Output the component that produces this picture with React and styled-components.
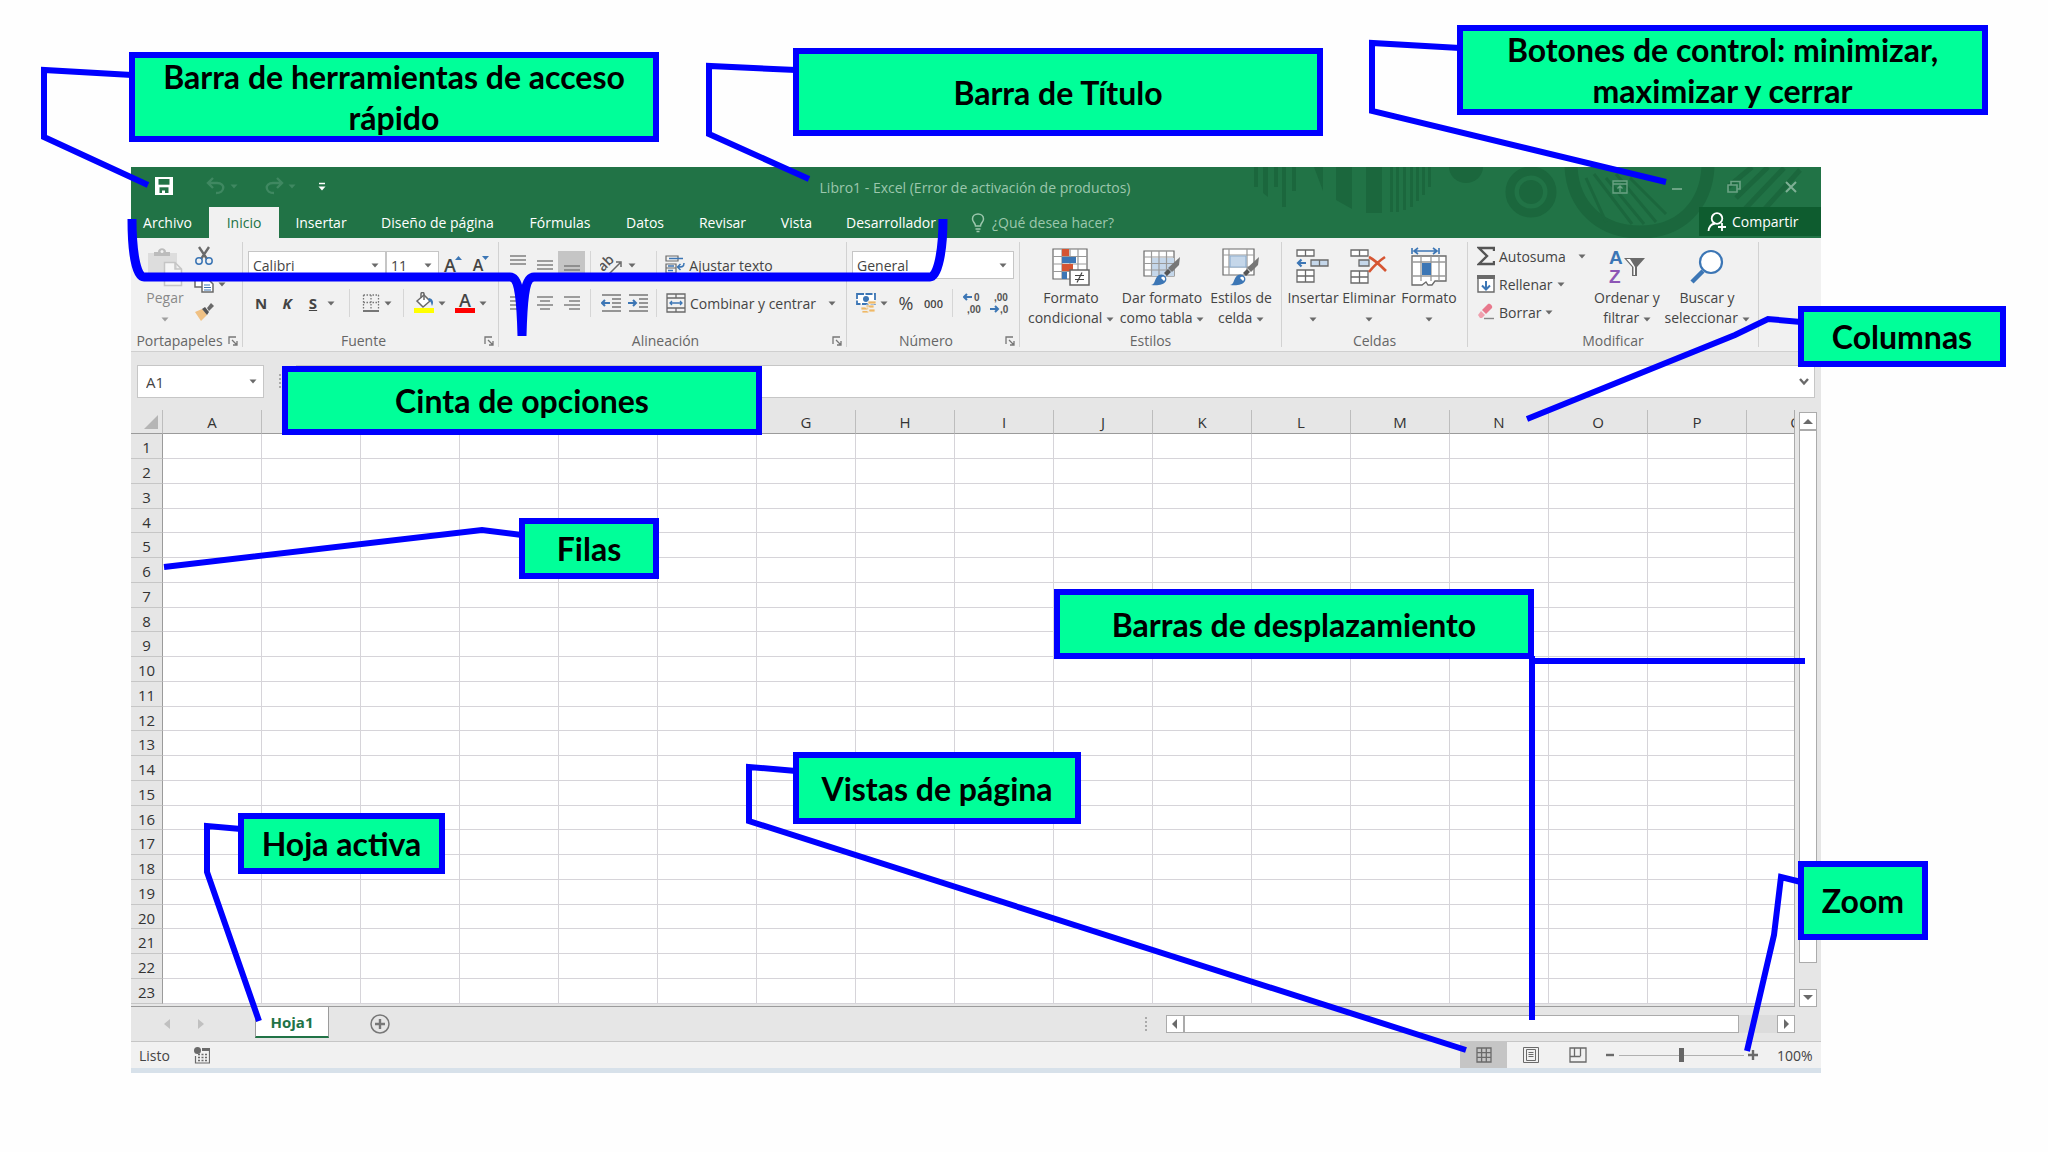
import React from 'react';
import styled, { createGlobalStyle } from 'styled-components';

const GlobalStyle = createGlobalStyle`
  * {
    box-sizing: border-box;
  }
  body {
    margin: 0;
    background: #fefefe;
    font-family: 'Open Sans', 'Noto Sans', sans-serif;
    font-size: 14px;
    color: #444;
  }
  button, input, select {
    font: inherit;
    color: inherit;
    margin: 0;
    padding: 0;
    border: 0;
    background: none;
  }
`;

const blue = '#0000ff';
const steel = '#3c76b5';
const gray = '#6a6a6a';

/* ---------- icons ---------- */

const Svg = ({ w, h, children, ...rest }) => (
  <svg width={w} height={h} viewBox={`0 0 ${w} ${h}`} fill="none" stroke={gray} strokeWidth="1.5" aria-hidden="true" {...rest}>
    {children}
  </svg>
);

const Arrow = ({ color = '#6a6a6a' }) => (
  <Svg w={8} h={5} stroke="none">
    <path d="M0.5 0.5H7.5L4 4.5Z" fill={color} />
  </Svg>
);

const Lines = ({ rows, ...rest }) => (
  <Svg w={18} h={20} stroke="#777" strokeWidth="1.4" {...rest}>
    {rows.map(([x, y, len]) => (
      <path key={y} d={`M${x} ${y}h${len}`} />
    ))}
  </Svg>
);

const SaveIcon = () => (
  <Svg w={18} h={18} stroke="#fff" strokeWidth="2">
    <path d="M1 1H17V17H1Z" />
    <path d="M2 9H16" strokeWidth="2.6" />
    <path d="M2 2H3.500V9H2ZM14.500 2H16V9H14.500ZM2 9H4.500V17H2ZM13.500 9H16V17H13.500ZM7 13.500H10V17H7Z" fill="#fff" stroke="none" />
  </Svg>
);

const UndoIcon = ({ flip }) => (
  <Svg w={20} h={18} stroke="#3f8861" strokeWidth="2.4">
    <path d="M7 1L2 6L7 11M2 6H11C20 6 19 16 10 16" transform={flip ? 'translate(20 0) scale(-1 1)' : undefined} />
  </Svg>
);

const CustomizeIcon = () => (
  <Svg w={8} h={9} stroke="#fff">
    <path d="M1 1.5H7" />
    <path d="M0.5 4.5H7.5L4 8.5Z" fill="#fff" stroke="none" />
  </Svg>
);

const BulbIcon = () => (
  <Svg w={14} h={20} stroke="#9cc7ad">
    <path d="M4.5 13C4.500 10 1.500 9 1.500 6C1.500 3 4 1 7 1C10 1 12.500 3 12.500 6C12.500 9 9.500 10 9.500 13ZM4.500 16H9.500M5.500 18.500H8.500" />
  </Svg>
);

const ShareIcon = () => (
  <Svg w={20} h={20} stroke="#fff" strokeWidth="1.8">
    <circle cx="10" cy="6.500" r="5.300" />
    <path d="M1.500 19C2 14.500 4.500 12 8 11.500M11 15H19M15 11V19" />
  </Svg>
);

const RibbonOptionsIcon = () => (
  <Svg w={16} h={14} stroke="#6ba384" strokeWidth="1.3">
    <path d="M1 1H15V13H1ZM1 4H15M8 12V6.500M5.500 8.500L8 6L10.500 8.500" />
  </Svg>
);
const MinimizeIcon = () => (
  <Svg w={12} h={14} stroke="#6ba384" strokeWidth="2">
    <path d="M1 9H11" />
  </Svg>
);
const RestoreIcon = () => (
  <Svg w={14} h={14} stroke="#6ba384" strokeWidth="1.600">
    <path d="M1 5H10V12H1ZM4 5V1.500H13V9H10" />
  </Svg>
);
const CloseIcon = () => (
  <Svg w={12} h={14} stroke="#7fb095" strokeWidth="2">
    <path d="M1 2L11 12M11 2L1 12" />
  </Svg>
);

const PasteIcon = () => (
  <Svg w={36} h={40} stroke="none">
    <path d="M1 6H30V33H1Z" fill="#d0d0d0" />
    <path d="M7 9V5H11C11 0 19 0 19 5H23V9Z" fill="#999" />
    <circle cx="15" cy="4.500" r="1.500" fill="#f1f1f1" />
    <path d="M17.500 15.500H28L34.500 22V38.500H17.500ZM28 15.500V22H34.500" fill="#f8f8f8" stroke="#a9a9a9" />
  </Svg>
);

const CutIcon = () => (
  <Svg w={20} h={20}>
    <path d="M5 1L13 13M15 1L7 13" strokeWidth="2.400" />
    <circle cx="5" cy="15" r="3.200" stroke={steel} />
    <circle cx="15" cy="15" r="3.200" stroke={steel} />
  </Svg>
);

const CopyIcon = () => (
  <Svg w={20} h={18}>
    <path d="M1 1H8L11 4V12H1Z" fill="#fff" />
    <path d="M8 5H15L19 9V17H8Z" fill="#fff" />
    <path d="M10 10H16M10 12.500H17M10 15H17" stroke={steel} strokeWidth="1.200" />
  </Svg>
);

const BrushIcon = () => (
  <Svg w={20} h={18} stroke="none">
    <path d="M1 9L8 6L13 12L7 18Z" fill="#f0c184" />
    <path d="M8 6L11 4L15 9L13 12Z" fill="#555" />
    <path d="M13 5L17 0L20 3L15 8Z" fill="#6a6a6a" />
  </Svg>
);

const GrowIcon = ({ down }) => (
  <Svg w={20} h={20} stroke="none">
    <path d={down ? 'M13 1H20L16.500 5Z' : 'M13 5H20L16.500 1Z'} fill={steel} />
  </Svg>
);

const BordersIcon = () => (
  <Svg w={18} h={18} stroke="#777" strokeWidth="1.300">
    <path d="M1.500 1H17M1.500 1V16M16.500 1V16M9 1V16M1.500 8.500H17" strokeDasharray="1.500 1.500" />
    <path d="M1 17H17" strokeWidth="2" />
  </Svg>
);

const FillIcon = () => (
  <Svg w={20} h={22}>
    <path d="M3 9L10 3L16 9L9 15Z" fill="#fff" />
    <path d="M7 6V2C7 0 10 0 10 2V8" />
    <path d="M15 6C19 7 20 10 18 14C17 11 17 9 14 8Z" fill={steel} stroke="none" />
    <path d="M0 16H20V21H0Z" fill="#ffff00" stroke="none" />
  </Svg>
);

const OrientationIcon = () => (
  <Svg w={24} h={22}>
    <text x="0" y="13" transform="rotate(-45 8 12)" fontSize="14" fontWeight="600" fill="#555" stroke="none">ab</text>
    <path d="M9 20L20 9M16 8H21V13" />
  </Svg>
);

const WrapIcon = () => (
  <Svg w={20} h={20} strokeWidth="1.200">
    <path d="M1 1H13V6H1Z" />
    <path d="M4 3.500H18" stroke={steel} strokeWidth="1.500" />
    <path d="M1 9H11V13H1ZM1 13H11V18H1Z" />
    <path d="M3 11H9M3 15.500H8M19 8C19 12 17 12 13 12M15.500 9L12.500 12L15.500 15" stroke={steel} strokeWidth="1.500" />
  </Svg>
);

const MergeIcon = () => (
  <Svg w={20} h={20} strokeWidth="1.300">
    <path d="M1 1H19V19H1ZM1 5H19M1 15H19M10 1V5M10 15V19" />
    <path d="M4 10H16M6 8L4 10L6 12M14 8L16 10L14 12" stroke={steel} />
  </Svg>
);

const IndentIcon = ({ right }) => (
  <Svg w={20} h={18} stroke="#777" strokeWidth="1.400">
    <path d="M1 1H20M11 5H20M11 9H20M11 13H20M1 17H20" />
    {right ? (
      <path d="M0 9H8M5 6L8 9L5 12" stroke={steel} strokeWidth="2" />
    ) : (
      <path d="M9 9H1M4 6L1 9L4 12" stroke={steel} strokeWidth="2" />
    )}
  </Svg>
);

const MoneyIcon = () => (
  <Svg w={20} h={20} stroke="none">
    <path d="M1 1H19V11H1Z" fill="#fff" stroke={steel} strokeWidth="1.800" strokeDasharray="7 1.500" />
    <circle cx="10" cy="6" r="3" fill={steel} />
    <path d="M12 8H20V11H12ZM10 12H18V15H10ZM5 14H13V17H5ZM6 17.500H13V20H6ZM12 16H19V19H12Z" fill="#efb866" stroke="#f1f1f1" strokeWidth="0.800" />
  </Svg>
);

const DecimalIcon = ({ less }) => (
  <Svg w={20} h={24} fontFamily="'Liberation Sans', sans-serif" fontSize="10" fontWeight="600">
    <text x={less ? 4 : 11} y="10" fill="#555" stroke="none">{less ? ',00' : '0'}</text>
    <text x={less ? 10 : 4} y="22" fill="#555" stroke="none">{less ? ',0' : ',00'}</text>
    {less ? (
      <path d="M0 18H8M5 15L8 18L5 21" stroke={steel} strokeWidth="2" />
    ) : (
      <path d="M9 6H1M4 3L1 6L4 9" stroke={steel} strokeWidth="2" />
    )}
  </Svg>
);

const ConditionalIcon = () => (
  <Svg w={38} h={38} strokeWidth="1.200">
    <path d="M1 1H35V31H1Z" fill="#fff" />
    <path d="M1 8.500H35M1 16H35M1 23.500H35M10 1V31M18 1V31M26 1V31" stroke="#999" />
    <path d="M10 1H17V8H10ZM10 16H21V23H10Z" fill="#d65532" stroke="none" />
    <path d="M10 9H24V15H10ZM10 24H15V31H10Z" fill={steel} stroke="none" />
    <path d="M18 22H37V37H18Z" fill="#fff" stroke="#666" strokeWidth="1.500" />
    <path d="M23 27.500H32M23 31.500H32M30 24.500L25 34.500" stroke="#444" />
  </Svg>
);

const PaintBrush = () => (
  <g stroke="none">
    <path d="M37 9L36 17L29 24L25 20Z" fill="#777" />
    <path d="M25 21L28 24L24 28L21 25Z" fill="#555" />
    <path d="M8 37C13 36 11 30 16 27C20 25 25 29 23 33C21 37 14 38 8 37Z" fill={steel} />
    <path d="M18 30C20 27 24 30 21 33Z" fill="#fff" />
  </g>
);

const TableFormatIcon = () => (
  <Svg w={38} h={38} strokeWidth="1.200">
    <path d="M1 3H31V28H1Z" fill="#fff" />
    <path d="M9 10H31V28H9Z" fill="#c5d7ea" stroke="none" />
    <path d="M1 9H31M1 15.500H31M1 22H31M8.500 3V28M16 3V28M23.500 3V28" stroke="#999" />
    <PaintBrush />
  </Svg>
);

const CellStylesIcon = () => (
  <Svg w={38} h={38} strokeWidth="1.200">
    <path d="M1 1H32V27H1Z" fill="#fff" />
    <path d="M1 7H32M1 19H32M7 1V27M25 1V27" stroke="#999" />
    <path d="M8 8H24V19H8Z" fill="#c5d7ea" stroke="#8fb0d0" />
    <PaintBrush />
  </Svg>
);

const InsertCellsIcon = () => (
  <Svg w={34} h={36} strokeWidth="1.300">
    <path d="M1 1H18V7H1ZM9.500 1V7M1 21H18V33H1ZM9.500 21V33M1 27H18" fill="#fff" />
    <path d="M15 11H32V17H15ZM23.500 11V17" fill="#c5d7ea" />
    <path d="M10 14H2M5.500 10.500L2 14L5.500 17.500" stroke={steel} strokeWidth="2.200" />
  </Svg>
);

const DeleteCellsIcon = () => (
  <Svg w={38} h={36} strokeWidth="1.300">
    <path d="M1 1H18V7H1ZM9.500 1V7M1 22H18V34H1ZM9.500 22V34M1 28H18" fill="#fff" />
    <path d="M9 11H19V17H9Z" fill="#c5d7ea" />
    <path d="M19 8C25 11 32 18 36 22M35 8C29 12 23 18 19 23" stroke="#d65532" strokeWidth="2.600" />
  </Svg>
);

const FormatCellsIcon = () => (
  <Svg w={36} h={40} strokeWidth="1.300">
    <path d="M1 1V7M28 1V7M3 4H26M7 1L3 4L7 7M22 1L26 4L22 7" stroke={steel} strokeWidth="1.600" />
    <path d="M1 9H35V34H24L21 38H17L15 35L11 38H1Z" fill="#fff" />
    <path d="M1 15H35M1 29H35M10 9V34M20 9V34M28 9V34" stroke="#999" />
    <path d="M11 16H20V28H11Z" fill={steel} stroke="none" />
  </Svg>
);

const SumIcon = () => (
  <Svg w={18} h={20} strokeWidth="2.400" stroke="#555">
    <path d="M17 5V2H2L10 10L2 18H17V15" />
  </Svg>
);
const FillDownIcon = () => (
  <Svg w={18} h={20} strokeWidth="1.400">
    <path d="M1 2H17V18H1Z" fill="#fff" />
    <path d="M0 1H18V5H0Z" fill={gray} stroke="none" />
    <path d="M9 7V15M5 11.500L9 15.500L13 11.500" stroke={steel} strokeWidth="2" />
  </Svg>
);
const EraserIcon = () => (
  <Svg w={18} h={18} stroke="none">
    <path d="M5 7L11 1C13 0 16 3 15 5L9 11Z" fill="#e8788c" />
    <path d="M4 8L8 12L5 15H3L1 12Z" fill="#f0a0ae" />
    <path d="M7 15.500H17" stroke="#888" strokeWidth="1.400" />
  </Svg>
);

const SortIcon = () => (
  <Svg w={38} h={38} stroke="none" fontFamily="'Liberation Sans', sans-serif" fontSize="19" fontWeight="600">
    <text x="1" y="16" fill={steel}>A</text>
    <text x="1" y="35" fill="#8d56b5">Z</text>
    <path d="M16 10H37L29 19V28H24V19Z" fill={gray} />
    <path d="M18.500 11H22L27 19V27H25.500V19Z" fill="#fff" />
  </Svg>
);

const SearchIcon = () => (
  <Svg w={36} h={36} stroke={steel}>
    <circle cx="22" cy="13" r="11" fill="#fff" strokeWidth="2.200" />
    <path d="M14 22L3 33" strokeWidth="4.500" />
  </Svg>
);

const LauncherIcon = () => (
  <Svg w={10} h={10} strokeWidth="1.300" stroke="#777">
    <path d="M1 8V1H8M4 4L9 9M9 5V9H5" />
  </Svg>
);

const MacroIcon = () => (
  <Svg w={16} h={17} stroke="none">
    <circle cx="3.500" cy="3.500" r="3.500" fill={gray} />
    <path d="M8 1H16V4H8Z" fill={gray} />
    <path d="M1.500 9V16H15.500V4" stroke={gray} strokeWidth="1.200" />
    <path d="M4 7.500H14M4 10.500H14M4 13.500H14" stroke={gray} strokeWidth="1.300" strokeDasharray="2 1.500" />
  </Svg>
);

const NormalViewIcon = () => (
  <Svg w={16} h={16} strokeWidth="1.300">
    <path d="M1 1H15V15H1ZM1 5.600H15M1 10.300H15M5.600 1V15M10.300 1V15" />
  </Svg>
);
const LayoutViewIcon = () => (
  <Svg w={18} h={16} strokeWidth="1">
    <path d="M1.500 0.500H16.500V15.500H1.500ZM4.500 2.500H13.500V13.500H4.500ZM6.500 5.500H11.500M6.500 7.500H11.500M6.500 9.500H11.500" />
  </Svg>
);
const BreakViewIcon = () => (
  <Svg w={18} h={16} strokeWidth="1.300">
    <path d="M1 1H17V15H1ZM5.500 1V9M11.500 1V9M1 9.500H11.500" />
  </Svg>
);

const TitleArt = () => (
  <ArtSvg viewBox="1240 167 581 71" aria-hidden="true">
    <g fill="#1b673d">
      <path d="M1254 167h4v20h-4zM1263 167h5v30l-5 -4zM1274 167h4v20h-4zM1282 167h4v40h-4zM1292 167h4v24h-4z" />
      <path d="M1314 167H1323V191Z" />
      <path d="M1336 167H1352V209L1336 200ZM1366 167H1382V213H1366Z" />
      <path d="M1390 167h3v45h-3zM1396 167h3v45h-3zM1403 167h3v43h-3zM1410 167h3v40h-3zM1416 167h3v34h-3zM1422 167h3v28h-3zM1428 167h3v20h-3z" />
      <path d="M1449 167A17 16 0 0 0 1483 167Z" />
      <circle cx="1531" cy="192" r="12" />
    </g>
    <circle cx="1531" cy="192" r="21" fill="none" stroke="#1b673d" strokeWidth="9" />
    <path d="M1571 167C1573 206 1600 232 1640 232C1680 232 1706 206 1708 167" fill="none" stroke="#1b673d" strokeWidth="13" />
    <path d="M1586 178L1606 222M1594 174L1632 224M1606 178L1644 224M1616 174L1656 222M1630 178L1666 214" stroke="#1b673d" strokeWidth="3" />
    <path d="M1728 187L1752 167M1736 198L1768 167M1742 212L1784 168M1762 212L1800 170" stroke="#1b673d" strokeWidth="5" />
  </ArtSvg>
);

/* ---------- data ---------- */

const columns = 'ABCDEFGHIJKLMNOPQ'.split('');
const rows = Array.from({ length: 23 }, (_, i) => i + 1);

const menu = [
  ['Insertar', 84],
  ['Diseño de página', 149],
  ['Fórmulas', 96],
  ['Datos', 74],
  ['Revisar', 81],
  ['Vista', 67],
  ['Desarrollador', 122],
];

const callouts = [
  { text: 'Barra de herramientas de acceso rápido', x: 129, y: 52, w: 530, h: 90 },
  { text: 'Barra de Título', x: 793, y: 48, w: 530, h: 88 },
  { text: 'Botones de control: minimizar, maximizar y cerrar', x: 1457, y: 25, w: 531, h: 90 },
  { text: 'Cinta de opciones', x: 282, y: 366, w: 480, h: 69 },
  { text: 'Filas', x: 519, y: 518, w: 140, h: 61 },
  { text: 'Columnas', x: 1798, y: 306, w: 208, h: 61 },
  { text: 'Barras de desplazamiento', x: 1054, y: 589, w: 480, h: 70 },
  { text: 'Vistas de página', x: 793, y: 752, w: 288, h: 72 },
  { text: 'Hoja activa', x: 238, y: 813, w: 207, h: 61 },
  { text: 'Zoom', x: 1798, y: 861, w: 130, h: 79 },
];

const leaders = [
  'M132 75L44 70V137L148 185',
  'M796 70L709 66V134L809 179',
  'M1460 48L1372 43V111L1666 182',
  'M522 535L482 530L164 567',
  'M1801 322L1768 319L1735 335L1527 419',
  'M1532 661H1805M1532 656V1020',
  'M796 771L749 767V821L1466 1050',
  'M241 829L207 826V872L259 1021',
  'M1801 882L1781 877L1774 935L1747 1051',
];

/* ---------- app ---------- */

const Picker = ({ label, value, width }) => (
  <PickerBox $width={width}>
    <select aria-label={label} defaultValue={value}>
      <option>{value}</option>
    </select>
    <Arrow />
  </PickerBox>
);

const RibbonGroup = ({ title, width, launcher, children }) => (
  <Group $width={width}>
    <GroupBody>{children}</GroupBody>
    <GroupFooter>
      <span>{title}</span>
      {launcher && (
        <Launcher aria-label={`Opciones de ${title}`}>
          <LauncherIcon />
        </Launcher>
      )}
    </GroupFooter>
  </Group>
);

const Big = ({ icon, lines, width }) => (
  <BigButton $width={width}>
    <BigIcon>{icon}</BigIcon>
    <span>{lines[0]}</span>
    <span>
      {lines[1]} <Arrow />
    </span>
  </BigButton>
);

const App = () => (
  <Page>
    <GlobalStyle />
    <Window>
      <Header>
        <TitleArt />
        <TitleBar>
          <QuickAccess>
            <Tool $width={38} aria-label="Guardar"><SaveIcon /></Tool>
            <Tool $width={70} aria-label="Deshacer"><UndoIcon /><Arrow color="#3f8861" /></Tool>
            <Tool $width={38} aria-label="Rehacer"><UndoIcon flip /><Arrow color="#3f8861" /></Tool>
            <Tool $width={38} aria-label="Personalizar"><CustomizeIcon /></Tool>
          </QuickAccess>
          <Title>Libro1 - Excel (Error de activación de productos)</Title>
          <WindowButtons>
            <Tool $width={57} aria-label="Opciones de la cinta"><RibbonOptionsIcon /></Tool>
            <Tool $width={57} aria-label="Minimizar"><MinimizeIcon /></Tool>
            <Tool $width={57} aria-label="Restaurar"><RestoreIcon /></Tool>
            <Tool $width={57} aria-label="Cerrar"><CloseIcon /></Tool>
          </WindowButtons>
        </TitleBar>
        <TabBar>
          <FileTab $width={78}>Archivo</FileTab>
          <Tab $width={70} $active>Inicio</Tab>
          {menu.map(([name, width]) => (
            <Tab key={name} $width={width}>{name}</Tab>
          ))}
          <Ask>
            <BulbIcon />
            <input aria-label="¿Qué desea hacer?" placeholder="¿Qué desea hacer?" />
          </Ask>
          <Share>
            <ShareIcon />
            Compartir
          </Share>
        </TabBar>
      </Header>

      <Ribbon>
        <RibbonGroup title="Portapapeles" width={112} launcher>
          <Faded>
            <Big icon={<PasteIcon />} lines={['Pegar', '']} width={58} />
          </Faded>
          <Stack>
            <Tool $width={40} aria-label="Cortar" $start><CutIcon /></Tool>
            <Tool $width={40} aria-label="Copiar" $start><CopyIcon /><Arrow /></Tool>
            <Tool $width={40} aria-label="Copiar formato" $start><BrushIcon /></Tool>
          </Stack>
        </RibbonGroup>

        <RibbonGroup title="Fuente" width={256} launcher>
          <Rows>
            <Row>
              <Picker label="Fuente" value="Calibri" width={138} />
              <Picker label="Tamaño" value="11" width={53} />
              <Tool $width={28} aria-label="Aumentar fuente"><SizeLetter $size={18}>A</SizeLetter><GrowIcon /></Tool>
              <Tool $width={28} aria-label="Disminuir fuente"><SizeLetter $size={16}>A</SizeLetter><GrowIcon down /></Tool>
            </Row>
            <Row>
              <Tool $width={26}><Letter>N</Letter></Tool>
              <Tool $width={26}><Letter><i>K</i></Letter></Tool>
              <Tool $width={44}><Letter><u>S</u></Letter><Space $width={2} /><Arrow /></Tool>
              <Split />
              <Tool $width={42} aria-label="Bordes"><BordersIcon /><Arrow /></Tool>
              <Split />
              <Tool $width={40} aria-label="Relleno"><FillIcon /><Arrow /></Tool>
              <Tool $width={42} aria-label="Color de fuente"><ColorLetter>A</ColorLetter><Arrow /></Tool>
            </Row>
          </Rows>
        </RibbonGroup>

        <RibbonGroup title="Alineación" width={348} launcher>
          <Rows>
            <Row>
              <Tool $width={27} aria-label="Arriba"><Lines rows={[[1, 1, 16], [1, 5, 16], [1, 9, 16]]} /></Tool>
              <Tool $width={27} aria-label="Medio"><Lines rows={[[1, 6, 16], [1, 10, 16], [1, 14, 16]]} /></Tool>
              <Tool $width={27} $pressed aria-label="Abajo"><Lines rows={[[1, 11, 16], [1, 15, 16], [1, 19, 16]]} /></Tool>
              <Split />
              <Tool $width={42} aria-label="Orientación"><OrientationIcon /><Arrow /></Tool>
              <Space $width={12} />
              <Split />
              <Tool $width={112}><WrapIcon />Ajustar texto</Tool>
            </Row>
            <Row>
              <Tool $width={27} aria-label="Izquierda"><Lines rows={[[1, 4, 16], [1, 8, 11], [1, 12, 16], [1, 16, 11]]} /></Tool>
              <Tool $width={27} aria-label="Centro"><Lines rows={[[1, 4, 16], [4, 8, 10], [1, 12, 16], [4, 16, 10]]} /></Tool>
              <Tool $width={27} aria-label="Derecha"><Lines rows={[[1, 4, 16], [6, 8, 11], [1, 12, 16], [6, 16, 11]]} /></Tool>
              <Split />
              <Tool $width={27} aria-label="Disminuir sangría"><IndentIcon /></Tool>
              <Tool $width={27} aria-label="Aumentar sangría"><IndentIcon right /></Tool>
              <Split />
              <Tool $width={176}><MergeIcon />Combinar y centrar<Space $width={4} /><Arrow /></Tool>
            </Row>
          </Rows>
        </RibbonGroup>

        <RibbonGroup title="Número" width={173} launcher>
          <Rows>
            <Row>
              <Picker label="Formato de número" value="General" width={162} />
            </Row>
            <Row>
              <Tool $width={40} aria-label="Moneda"><MoneyIcon /><Arrow /></Tool>
              <Tool $width={28}><Percent>%</Percent></Tool>
              <Tool $width={27}><Thousands>000</Thousands></Tool>
              <Split />
              <Tool $width={27} aria-label="Aumentar decimales"><DecimalIcon /></Tool>
              <Tool $width={27} aria-label="Disminuir decimales"><DecimalIcon less /></Tool>
            </Row>
          </Rows>
        </RibbonGroup>

        <RibbonGroup title="Estilos" width={262}>
          <Big icon={<ConditionalIcon />} lines={['Formato', 'condicional']} width={92} />
          <Big icon={<TableFormatIcon />} lines={['Dar formato', 'como tabla']} width={90} />
          <Big icon={<CellStylesIcon />} lines={['Estilos de', 'celda']} width={68} />
        </RibbonGroup>

        <RibbonGroup title="Celdas" width={186}>
          <Big icon={<InsertCellsIcon />} lines={['Insertar', '']} width={52} />
          <Big icon={<DeleteCellsIcon />} lines={['Eliminar', '']} width={60} />
          <Big icon={<FormatCellsIcon />} lines={['Formato', '']} width={60} />
        </RibbonGroup>

        <RibbonGroup title="Modificar" width={291}>
          <Stack $indent>
            <Tool $width={114} $start><SumIcon />Autosuma<Space $width={4} /><Arrow /></Tool>
            <Tool $width={114} $start><FillDownIcon />Rellenar<Arrow /></Tool>
            <Tool $width={114} $start><EraserIcon />Borrar<Arrow /></Tool>
          </Stack>
          <Big icon={<SortIcon />} lines={['Ordenar y', 'filtrar']} width={72} />
          <Big icon={<SearchIcon />} lines={['Buscar y', 'seleccionar']} width={88} />
        </RibbonGroup>
      </Ribbon>

      <FormulaBar>
        <Picker label="Cuadro de nombres" value="A1" width={127} />
        <FormulaGrip />
        <FormulaField>
          <input aria-label="Barra de fórmulas" />
          <Svg w={10} h={8} strokeWidth="2.400"><path d="M1 1L5 5.500L9 1" /></Svg>
        </FormulaField>
      </FormulaBar>

      <SheetArea>
        <SheetClip>
          <Sheet>
            <thead>
              <tr>
                <Corner>
                  <Svg w={16} h={16} stroke="none"><path d="M15 1V15H1Z" fill="#b5b5b5" /></Svg>
                </Corner>
                {columns.map((c) => (
                  <th key={c} scope="col">{c}</th>
                ))}
              </tr>
            </thead>
            <tbody>
              {rows.map((r) => (
                <tr key={r}>
                  <th scope="row">{r}</th>
                  {columns.map((c) => (
                    <td key={c} />
                  ))}
                </tr>
              ))}
            </tbody>
          </Sheet>
        </SheetClip>
        <VerticalScroll>
          <ScrollButton aria-label="Subir"><Svg w={10} h={6} stroke="none"><path d="M0 6H10L5 1Z" fill={gray} /></Svg></ScrollButton>
          <VerticalThumb />
          <ScrollButton aria-label="Bajar"><Svg w={10} h={6} stroke="none"><path d="M0 0H10L5 5Z" fill={gray} /></Svg></ScrollButton>
        </VerticalScroll>
      </SheetArea>

      <SheetTabs>
        <SheetNav>
          <Tool $width={34} aria-label="Hoja anterior"><Svg w={6} h={10} stroke="none"><path d="M6 0V10L0 5Z" fill="#c0c0c0" /></Svg></Tool>
          <Tool $width={34} aria-label="Hoja siguiente"><Svg w={6} h={10} stroke="none"><path d="M0 0V10L6 5Z" fill="#c0c0c0" /></Svg></Tool>
        </SheetNav>
        <SheetTab>Hoja1</SheetTab>
        <Tool $width={102} aria-label="Hoja nueva">
          <Svg w={20} h={20} stroke="#777"><circle cx="10" cy="10" r="9" /><path d="M5 10H15M10 5V15" strokeWidth="2.400" /></Svg>
        </Tool>
        <Dots />
        <HorizontalScroll>
          <ScrollButton aria-label="Izquierda"><Svg w={6} h={10} stroke="none"><path d="M5 0V10L0 5Z" fill={gray} /></Svg></ScrollButton>
          <HorizontalThumb />
          <ScrollButton aria-label="Derecha"><Svg w={6} h={10} stroke="none"><path d="M1 0V10L6 5Z" fill={gray} /></Svg></ScrollButton>
        </HorizontalScroll>
      </SheetTabs>

      <StatusBar>
        <Ready>Listo</Ready>
        <MacroIcon />
        <Views>
          <Tool $width={47} $pressed aria-label="Normal"><NormalViewIcon /></Tool>
          <Tool $width={47} aria-label="Diseño de página"><LayoutViewIcon /></Tool>
          <Tool $width={47} aria-label="Saltos de página"><BreakViewIcon /></Tool>
        </Views>
        <Tool $width={18} aria-label="Alejar"><Svg w={10} h={10} strokeWidth="2.400"><path d="M1 5H9" /></Svg></Tool>
        <ZoomRange aria-label="Zoom" type="range" min="0" max="100" defaultValue="50" />
        <Tool $width={18} aria-label="Acercar"><Svg w={10} h={10} strokeWidth="2.400"><path d="M0 5H10M5 0V10" /></Svg></Tool>
        <Percentage>100%</Percentage>
      </StatusBar>
      <Strip />
    </Window>

    <Overlay viewBox="0 0 2048 1152" aria-hidden="true">
      <g fill="none" stroke={blue} strokeWidth="6">
        {leaders.map((d) => (
          <path key={d} d={d} />
        ))}
      </g>
      <path
        d="M132 219C132 250 136 277 144 277H510C519 277 521 296 522 336C523 296 525 277 534 277H930C938 277 943 250 943 219"
        fill="none"
        stroke={blue}
        strokeWidth="9"
        strokeLinejoin="bevel"
      />
    </Overlay>
    {callouts.map((c) => (
      <Callout key={c.text} $x={c.x} $y={c.y} $w={c.w} $h={c.h}>
        {c.text}
      </Callout>
    ))}
  </Page>
);

export default App;

/* ---------- styles ---------- */

const Page = styled.main`
  position: relative;
  min-height: 100vh;
  padding: 167px 227px 0 131px;
`;

const Window = styled.section`
  display: flex;
  flex-direction: column;
  background: #e6e6e6;
`;

const Header = styled.header`
  position: relative;
  background: #217346;
  color: #fff;
`;

const ArtSvg = styled.svg`
  position: absolute;
  top: 0;
  right: 0;
  width: 581px;
  height: 71px;
`;

const TitleBar = styled.div`
  position: relative;
  display: grid;
  grid-template-columns: 1fr auto 1fr;
  align-items: center;
  height: 40px;
  padding-right: 2px;
`;

const QuickAccess = styled.div`
  display: flex;
  gap: 4px;
  padding: 0 0 2px 14px;
`;

const Title = styled.div`
  color: #9cc7ad;
`;

const WindowButtons = styled.div`
  display: flex;
  justify-content: flex-end;
`;

const Tool = styled.button`
  display: flex;
  align-items: center;
  justify-content: ${(p) => (p.$start ? 'flex-start' : 'center')};
  gap: 4px;
  flex-shrink: 0;
  width: ${(p) => p.$width}px;
  height: 28px;
  white-space: nowrap;
  background: ${(p) => (p.$pressed ? '#c5c5c5' : 'none')};

  svg {
    flex-shrink: 0;
  }
`;

const TabBar = styled.nav`
  position: relative;
  display: flex;
  height: 31px;
`;

const Tab = styled.button`
  width: ${(p) => p.$width}px;
  flex-shrink: 0;
  white-space: nowrap;
  color: ${(p) => (p.$active ? '#217346' : '#fff')};
  background: ${(p) => (p.$active ? '#f1f1f1' : 'none')};
`;

const FileTab = styled(Tab)`
  padding-right: 5px;
`;

const Ask = styled.label`
  display: flex;
  align-items: center;
  gap: 7px;
  padding-left: 19px;

  input {
    width: 160px;
    outline: none;
  }

  input::placeholder {
    color: #9cc7ad;
    opacity: 1;
  }
`;

const Share = styled.button`
  display: flex;
  align-items: center;
  gap: 5px;
  width: 122px;
  height: 29px;
  margin-left: auto;
  padding-left: 8px;
  color: #fff;
  background: #0e5c2f;
`;

const Ribbon = styled.div`
  display: flex;
  height: 114px;
  padding: 4px 0;
  background: #f1f1f1;
  border-bottom: 1px solid #cfcfcf;
`;

const Group = styled.div`
  display: flex;
  flex-direction: column;
  flex-shrink: 0;
  width: ${(p) => p.$width}px;
  border-right: 1px solid #d2d2d2;
`;

const GroupBody = styled.div`
  display: flex;
  height: 92px;
  flex-shrink: 0;
  padding-left: 5px;
`;

const GroupFooter = styled.div`
  display: flex;
  align-items: center;
  flex: 1;
  line-height: 14px;
  color: #666;

  span {
    flex: 1;
    text-align: center;
  }
`;

const Launcher = styled.button`
  display: flex;
  width: 14px;
`;

const Stack = styled.div`
  display: flex;
  flex-direction: column;
  padding-left: ${(p) => (p.$indent ? 4 : 0)}px;
`;

const Rows = styled.div`
  display: flex;
  flex-direction: column;
  gap: 10px;
  padding-top: 9px;
`;

const Row = styled.div`
  display: flex;
  align-items: center;
  height: 28px;
`;

const Split = styled.span`
  width: 1px;
  height: 28px;
  margin: 0 6px 0 5px;
  background: #d6d6d6;
`;

const Space = styled.span`
  width: ${(p) => p.$width}px;
`;

const BigButton = styled.button`
  display: flex;
  flex-direction: column;
  align-items: center;
  width: ${(p) => p.$width}px;
  padding-top: 4px;
  line-height: 20px;
  white-space: nowrap;

  span svg {
    vertical-align: middle;
  }
`;

const BigIcon = styled.div`
  display: flex;
  align-items: center;
  height: 42px;
`;

const Faded = styled.div`
  display: flex;
  opacity: 0.6;
`;

const Letter = styled.span`
  font-size: 15px;
  font-weight: 700;
`;

const SizeLetter = styled.span`
  margin-right: -18px;
  font-size: ${(p) => p.$size}px;
  font-weight: 600;
`;

const ColorLetter = styled.span`
  width: 20px;
  height: 20px;
  border-bottom: 5px solid #ff0000;
  font-size: 18px;
  font-weight: 600;
  line-height: 15px;
`;

const Percent = styled.span`
  font-size: 18px;
`;

const Thousands = styled.span`
  font-size: 11px;
  font-weight: 600;
`;

const PickerBox = styled.div`
  display: grid;
  align-items: center;
  width: ${(p) => p.$width}px;
  height: 100%;
  background: #fff;
  border: 1px solid #c6c6c6;

  select {
    grid-area: 1 / 1;
    height: 100%;
    padding-left: 4px;
    appearance: none;
  }

  svg {
    grid-area: 1 / 1;
    justify-self: end;
    margin-right: 6px;
    pointer-events: none;
  }
`;

const FormulaBar = styled.div`
  display: flex;
  height: 58px;
  padding: 13px 6px 12px;

  select {
    padding-left: 8px;
    font-size: 15px;
  }
`;

const FormulaGrip = styled.span`
  width: 2px;
  height: 14px;
  margin: 9px 15px;
  border-left: 2px dotted #aaa;
`;

const FormulaField = styled.div`
  display: flex;
  flex: 1;
  align-items: center;
  padding-right: 5px;
  background: #fff;
  border: 1px solid #c6c6c6;

  input {
    flex: 1;
    outline: none;
  }
`;

const SheetArea = styled.div`
  display: flex;
  height: 597px;
`;

const SheetClip = styled.div`
  flex: 1;
  overflow: hidden;
  border-right: 1px solid #ababab;
  border-bottom: 1px solid #9b9b9b;
`;

const Sheet = styled.table`
  table-layout: fixed;
  width: 1715px;
  border-spacing: 0;
  background: #fff;
  font-size: 15px;
  color: #333;

  th {
    padding: 0;
    font-weight: 400;
    line-height: 20px;
    background: #e6e6e6;
    border-right: 1px solid #bdbdbd;
    border-bottom: 1px solid #c6c6c6;
  }

  thead th {
    height: 24px;
    border-bottom-color: #9b9b9b;
  }

  tbody tr {
    height: 25px;
  }

  tbody tr:nth-child(4n) {
    height: 24px;
  }

  tbody th {
    padding-top: 2px;
    border-right-color: #9b9b9b;
  }

  td {
    padding: 0;
    border-right: 1px solid #d6d4d9;
    border-bottom: 1px solid #d6d4d9;
  }
`;

const Corner = styled.th`
  width: 32px;

  svg {
    display: block;
    margin-left: 12px;
  }
`;

const VerticalScroll = styled.div`
  display: flex;
  flex-direction: column;
  width: 26px;
  padding: 2px 3px 0 4px;
`;

const ScrollButton = styled.button`
  display: flex;
  align-items: center;
  justify-content: center;
  flex-shrink: 0;
  width: 18px;
  height: 18px;
  background: #fff;
  border: 1px solid #ababab;
`;

const VerticalThumb = styled.div`
  flex: 1;
  width: 18px;
  margin-bottom: 26px;
  background: #fff;
  border: 1px solid #ababab;
`;

const SheetTabs = styled.div`
  display: flex;
  align-items: center;
  height: 35px;
  padding-right: 26px;
  border-bottom: 1px solid #c6c6c6;
`;

const SheetNav = styled.div`
  display: flex;
  width: 124px;
  padding-left: 19px;
`;

const SheetTab = styled.button`
  align-self: flex-start;
  width: 74px;
  height: 31px;
  color: #217346;
  font-size: 15px;
  font-weight: 700;
  background: #fff;
  border: 1px solid #9b9b9b;
  border-top: 0;
  border-bottom: 2px solid #217346;
`;

const Dots = styled.span`
  width: 2px;
  height: 14px;
  margin-left: auto;
  border-left: 2px dotted #aaa;
`;

const HorizontalScroll = styled.div`
  display: flex;
  width: 629px;
  margin-left: 19px;
  background: #dcdcdc;
`;

const HorizontalThumb = styled.div`
  flex: 1;
  margin-right: 38px;
  background: #fff;
  border: 1px solid #ababab;
`;

const StatusBar = styled.footer`
  display: flex;
  align-items: center;
  height: 26px;
  overflow: hidden;
  background: #f1f1f1;
`;

const Ready = styled.span`
  width: 63px;
  padding-left: 8px;
`;

const Views = styled.div`
  display: flex;
  margin-left: auto;
`;

const ZoomRange = styled.input`
  width: 125px;
  height: 16px;
  appearance: none;

  &::-webkit-slider-runnable-track {
    height: 14px;
    background: linear-gradient(#b0b0b0, #b0b0b0) center / 100% 1px no-repeat;
  }

  &::-webkit-slider-thumb {
    appearance: none;
    width: 5px;
    height: 14px;
    background: #666;
  }
`;

const Percentage = styled.span`
  width: 59px;
  padding-left: 15px;
`;

const Strip = styled.div`
  height: 5px;
  background: #d7e1ea;
`;

const Overlay = styled.svg`
  position: absolute;
  top: 0;
  left: 0;
  width: 2048px;
  height: 1152px;
  pointer-events: none;
`;

const Callout = styled.div`
  position: absolute;
  left: ${(p) => p.$x}px;
  top: ${(p) => p.$y}px;
  width: ${(p) => p.$w}px;
  height: ${(p) => p.$h}px;
  display: flex;
  align-items: center;
  justify-content: center;
  border: 6px solid ${blue};
  background: #00ff99;
  color: #000;
  font-family: Lato, sans-serif;
  font-size: 32px;
  font-weight: 700;
  line-height: 41px;
  text-align: center;
`;
